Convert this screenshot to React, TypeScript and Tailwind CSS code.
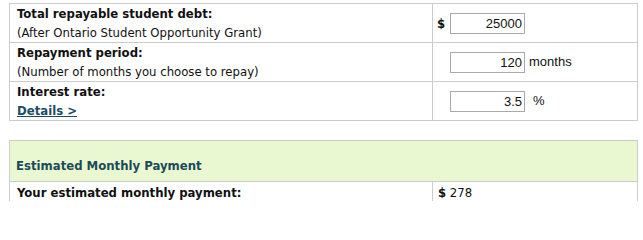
import React from "react";

const label = "font-['DejaVu_Sans_Condensed','DejaVu_Sans',sans-serif] text-[13px] leading-[19px] text-[#111]";
const arial = "font-['Liberation_Sans',Arial,sans-serif] text-[13px] text-[#111]";

function Field({ value, suffix, prefix }: { value: string; suffix?: React.ReactNode; prefix?: boolean }) {
  return (
    <div className="flex items-center">
      <span className={`${label} font-bold w-[13px] ${prefix ? "" : "invisible"}`}>$</span>
      <input
        readOnly
        value={value}
        className={`${arial} w-[75px] h-[21px] border border-[#a9a9a9] bg-white text-right px-[2px] outline-none`}
      />
      {suffix}
    </div>
  );
}

export default function App() {
  return (
    <div className="bg-white w-[643px] h-[201px] overflow-hidden pt-[3px] pl-[9px]">
      <table className="w-[629px] border-collapse">
        <tbody>
          <tr className="h-[39px]">
            <td className="border border-[#cccccc] w-[423px] px-[7px] py-0 align-middle">
              <div className={`${label} font-bold`}>Total repayable student debt:</div>
              <div className={label}>(After Ontario Student Opportunity Grant)</div>
            </td>
            <td className="border border-[#cccccc] pl-[4px] py-0 align-middle">
              <Field value="25000" prefix />
            </td>
          </tr>
          <tr className="h-[39px]">
            <td className="border border-[#cccccc] px-[7px] py-0 align-middle">
              <div className={`${label} font-bold`}>Repayment period:</div>
              <div className={label}>(Number of months you choose to repay)</div>
            </td>
            <td className="border border-[#cccccc] pl-[4px] py-0 align-middle">
              <Field value="120" suffix={<span className={`${arial} ml-[4px]`}>months</span>} />
            </td>
          </tr>
          <tr className="h-[39px]">
            <td className="border border-[#cccccc] px-[7px] py-0 align-middle">
              <div className={`${label} font-bold`}>Interest rate:</div>
              <div className={label}>
                <a href="#" className="block w-fit font-bold text-[#1a4d66] underline">
                  Details &gt;
                </a>
              </div>
            </td>
            <td className="border border-[#cccccc] pl-[4px] py-0 align-middle">
              <Field value="3.5" suffix={<span className={`${arial} ml-[8px]`}>%</span>} />
            </td>
          </tr>
        </tbody>
      </table>

      <table className="w-[629px] border-collapse mt-[19px]">
        <tbody>
          <tr className="h-[41px]">
            <td
              colSpan={2}
              className="border border-[#cccccc] bg-[#eaf8d1] pl-[6px] pr-[4px] pt-[15px] pb-[5px] align-top"
            >
              <div className="font-['DejaVu_Sans_Condensed','DejaVu_Sans',sans-serif] text-[13px] leading-[20px] font-bold text-[#1b4a5a]">
                Estimated Monthly Payment
              </div>
            </td>
          </tr>
          <tr className="h-[39px]">
            <td className="border border-[#cccccc] w-[423px] px-[7px] py-0 align-top">
              <div className={`${label} font-bold pt-[1px]`}>Your estimated monthly payment:</div>
            </td>
            <td className="border border-[#cccccc] px-[5px] py-0 align-top">
              <div className={`${label} pt-[1px]`}>
                <span className="font-bold">$</span> 278
              </div>
            </td>
          </tr>
        </tbody>
      </table>
    </div>
  );
}
